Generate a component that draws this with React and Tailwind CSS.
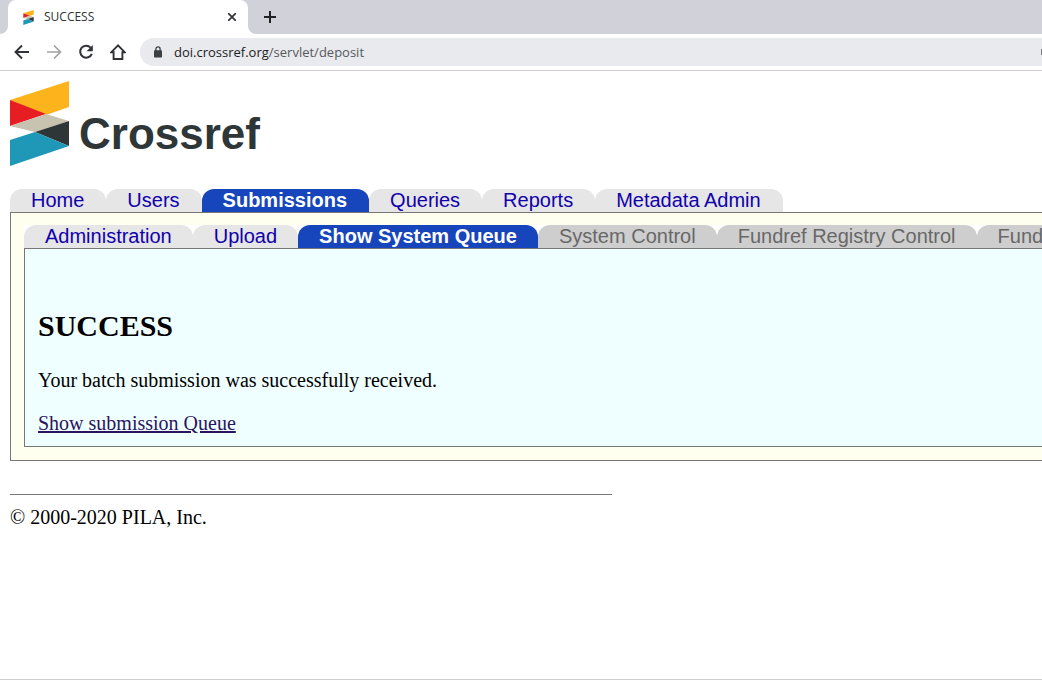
import React from "react";

const mainTabs = [
  { label: "Home" },
  { label: "Users" },
  { label: "Submissions", active: true },
  { label: "Queries" },
  { label: "Reports" },
  { label: "Metadata Admin" },
];

const subTabs = [
  { label: "Administration" },
  { label: "Upload" },
  { label: "Show System Queue", active: true },
  { label: "System Control", muted: true },
  { label: "Fundref Registry Control", muted: true },
  { label: "Fund", muted: true },
];

function Emblem({ className }) {
  return (
    <svg viewBox="0 0 59 85" className={className} aria-hidden="true">
      <polygon points="0,19 59,0 59,26 36,34" fill="#fcb31c" />
      <polygon points="0,19 36,33 0,45" fill="#e71d24" />
      <polygon points="0,45 36,33 59,40 25,51" fill="#c8c2b0" />
      <polygon points="59,40 59,65 25,51" fill="#2e3637" />
      <polygon points="0,59 25,51 59,65 0,85" fill="#1f98b8" />
    </svg>
  );
}

function Tabs({ items, label, spacing }) {
  return (
    <nav aria-label={label} className="flex overflow-hidden whitespace-nowrap bg-white font-['Liberation_Sans',Arial,sans-serif] text-xl leading-[23px]">
      {items.map((t) => (
        <a
          key={t.label}
          href="#"
          aria-current={t.active ? "page" : undefined}
          className={
            "h-[23px] shrink-0 rounded-t-xl pl-[21px] " +
            spacing +
            (t.active
              ? " bg-[#1745bb] font-bold text-white"
              : t.muted
                ? " bg-[#cecece] text-[#686868]"
                : " bg-[#e6e6e6] text-[#1000ae]")
          }
        >
          {t.label}
        </a>
      ))}
    </nav>
  );
}

function BrowserChrome() {
  return (
    <header className="font-['Open_Sans','Noto_Sans',sans-serif] text-[#303236]">
      <div className="flex h-[34px] bg-[#d1d1da]">
        <div className="flex w-2 bg-white">
          <div className="grow rounded-br-lg bg-[#d1d1da]" />
        </div>
        <div className="flex w-60 items-center rounded-t-lg bg-white pl-[15px] pr-2.5">
          <Emblem className="h-[15px] w-[11px]" />
          <span className="ml-2.5 grow text-[12px] leading-4">SUCCESS</span>
          <button aria-label="Close tab" className="p-0.5">
            <svg viewBox="0 0 8 8" className="size-2" stroke="currentColor" strokeWidth="1.7">
              <path d="M0 0L8 8M8 0L0 8" />
            </svg>
          </button>
        </div>
        <div className="flex w-2 bg-white">
          <div className="grow rounded-bl-lg bg-[#d1d1da]" />
        </div>
        <button aria-label="New tab" className="pl-2">
          <svg viewBox="0 0 12 12" className="size-3" stroke="#202124" strokeWidth="2">
            <path d="M6 0V12M0 6H12" />
          </svg>
        </button>
      </div>
      <div className="flex h-[37px] items-center border-b border-[#cfcfcf] bg-white pl-3.5">
        <div className="flex gap-4">
          <button aria-label="Back">
            <svg viewBox="0 0 16 16" className="size-4" fill="none" stroke="currentColor" strokeWidth="1.9">
              <path d="M15 8H2M8 1.5L1.5 8L8 14.5" />
            </svg>
          </button>
          <button aria-label="Forward" className="text-[#a2a2a2]">
            <svg viewBox="0 0 16 16" className="size-4" fill="none" stroke="currentColor" strokeWidth="1.7">
              <path d="M1 8H14M8 1.5L14.5 8L8 14.5" />
            </svg>
          </button>
          <button aria-label="Reload">
            <svg viewBox="0 0 16 16" className="size-4" fill="none" stroke="currentColor" strokeWidth="2">
              <path d="M12.6 3.6A6 6 0 1 0 13.8 9.8" />
              <path d="M14.8 1V7.2H8.6Z" fill="currentColor" stroke="none" />
            </svg>
          </button>
          <button aria-label="Home page">
            <svg viewBox="0 0 16 16" className="size-4" fill="none" stroke="currentColor" strokeWidth="1.9">
              <path d="M8 1.4L1.4 8.2H3.6V15H12.4V8.2H14.6Z" />
            </svg>
          </button>
        </div>
        <div className="ml-3.5 flex h-7 grow items-center overflow-hidden rounded-l-full bg-[#e9eaed] pl-3.5">
          <svg viewBox="0 0 8 12" className="h-3 w-2 shrink-0" fill="none" aria-hidden="true">
            <rect y="4.2" width="8" height="7.4" rx="0.8" fill="#3c4043" />
            <path d="M1.9 5V3a2.1 2.1 0 0 1 4.2 0V5" stroke="#3c4043" strokeWidth="1.3" />
          </svg>
          <a href="#" className="ml-3 grow text-[13px] leading-5 text-[#202124]">
            doi.crossref.org<span className="text-[#55585d]">/servlet/deposit</span>
          </a>
          <span className="h-1.5 w-px bg-[#77797d]" />
        </div>
      </div>
    </header>
  );
}

export default function App() {
  return (
    <div className="flex min-h-screen flex-col overflow-x-hidden bg-white">
      <BrowserChrome />
      <main className="pl-2.5 pt-2.5 font-['Liberation_Serif','Times_New_Roman',serif] text-xl leading-6 text-black">
        <a href="#" aria-label="Crossref" className="flex h-[85px] w-fit items-center">
          <Emblem className="h-[85px] w-[59px]" />
          <span className="ml-2.5 pt-5 font-['Liberation_Sans',Arial,sans-serif] text-[44px] font-bold leading-[44px] text-[#2e3637]">
            Crossref
          </span>
        </a>
        <div className="mt-[23px]">
          <Tabs items={mainTabs} label="Sections" spacing="pr-[22px]" />
          <div className="border border-r-0 border-[#777] bg-[#ffffef] pb-[13px] pl-[13px] pt-3">
            <Tabs items={subTabs} label="Submission tools" spacing="pr-[21px]" />
            <section className="border border-r-0 border-[#777] bg-[#efffff] px-[13px] pb-[11px] pt-[59px]">
              <h1 className="text-[30px] font-bold leading-9">SUCCESS</h1>
              <p className="mt-6">Your batch submission was successfully received.</p>
              <p className="mt-[19px]">
                <a href="#" className="text-[#2b145e] underline decoration-2">Show submission Queue</a>
              </p>
            </section>
          </div>
        </div>
        <footer className="mt-[33px]">
          <hr className="w-[602px] max-w-full border-[#777]" />
          <p className="mt-2.5">© 2000-2020 PILA, Inc.</p>
        </footer>
      </main>
      <div className="mt-auto h-[5px] border-t border-[#cfcfcf]" />
    </div>
  );
}
